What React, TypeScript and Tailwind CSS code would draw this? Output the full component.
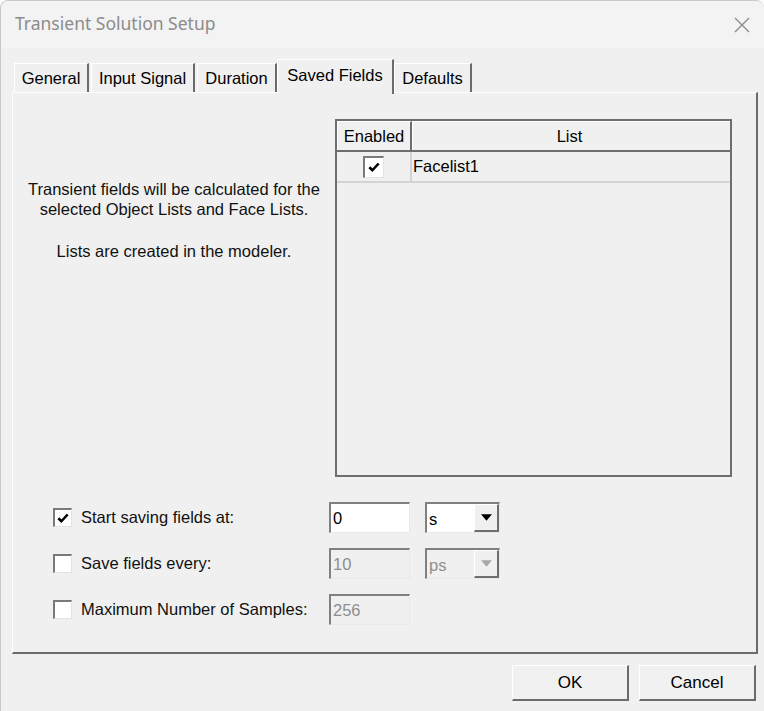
import React from "react";

function Check({ className = "" }: { className?: string }) {
  return (
    <svg viewBox="0 0 12 12" className={className}>
      <path d="M2 6.2 L4.6 8.8 L10 3" fill="none" stroke="#000" strokeWidth="2.2" />
    </svg>
  );
}

function CheckBox({ checked, big }: { checked?: boolean; big?: boolean }) {
  return (
    <div
      className={`${big ? "w-[21px] h-[22px]" : "w-[19px] h-[19px]"} bg-white border-t-2 border-l-2 border-t-[#7a7a7a] border-l-[#7a7a7a] border-b border-r border-b-[#e3e3e3] border-r-[#e3e3e3] flex items-center justify-center`}
    >
      {checked && <Check className="w-[14px] h-[14px]" />}
    </div>
  );
}

function Tab({ label, active, w }: { label: string; active?: boolean; w: string }) {
  if (active) {
    return (
      <div
        className={`relative z-10 ${w} h-[35px] -mb-[2px] pt-[7px] text-center bg-[#f0f0f0] border-t border-l border-t-white border-l-white border-r-2 border-r-[#6b6b6b] text-black`}
      >
        {label}
      </div>
    );
  }
  return (
    <div
      className={`${w} h-[29px] pt-[6px] mt-[4px] text-center border-t border-l border-t-white border-l-white border-r-2 border-r-[#6b6b6b] text-black`}
    >
      {label}
    </div>
  );
}

function Input({ value, disabled }: { value: string; disabled?: boolean }) {
  return (
    <div
      className={`w-[81px] h-[31px] border-t-2 border-l-2 border-t-[#808080] border-l-[#808080] border-b border-r border-b-[#e8e8e8] border-r-[#e8e8e8] flex items-center px-[2px] ${
        disabled ? "bg-[#f0f0f0] text-[#8e8e8e]" : "bg-white text-black"
      }`}
    >
      {value}
    </div>
  );
}

function Select({ value, disabled }: { value: string; disabled?: boolean }) {
  return (
    <div
      className={`w-[75px] h-[31px] border-t-2 border-l-2 border-t-[#808080] border-l-[#808080] border-b border-r border-b-[#e8e8e8] border-r-[#e8e8e8] flex items-stretch ${
        disabled ? "bg-[#f0f0f0] text-[#8e8e8e]" : "bg-white text-black"
      }`}
    >
      <div className="flex-1 flex items-center px-[2px] pt-[3px]">{value}</div>
      <div className="w-[25px] bg-[#f0f0f0] border-t border-l border-t-white border-l-white border-b-2 border-r-2 border-b-[#6e6e6e] border-r-[#6e6e6e] flex items-center justify-center">
        <svg viewBox="0 0 10 6" className="w-[11px] h-[7px]">
          <path d="M0 0 L10 0 L5 6 Z" fill={disabled ? "#a8a8a8" : "#000"} />
        </svg>
      </div>
    </div>
  );
}

function FormRow({
  checked,
  label,
  children,
}: {
  checked?: boolean;
  label: string;
  children: React.ReactNode;
}) {
  return (
    <div className="h-[31px] flex items-center">
      <div className="w-[28px]">
        <CheckBox checked={checked} />
      </div>
      <div className="w-[248px] text-[#111]">{label}</div>
      <div className="flex items-center gap-[15px]">{children}</div>
    </div>
  );
}

function Button({ label }: { label: string }) {
  return (
    <div className="w-[117px] h-[36px] bg-[#f1f1f1] border-t border-l border-t-white border-l-white border-b-2 border-r-2 border-b-[#6b6b6b] border-r-[#6b6b6b] flex items-center justify-center text-[17px] text-black">
      {label}
    </div>
  );
}

export default function App() {
  return (
    <div className="w-[764px] h-[711px] bg-[#f0f0f0] flex flex-col font-['Liberation_Sans',Arial,sans-serif] text-[16.5px] leading-none overflow-hidden rounded-tl-[8px] rounded-tr-[8px] border-t border-l border-[#c8c8c8]">
      {/* Title bar */}
      <div className="h-[47px] bg-[#f3f3f3] flex items-center justify-between pl-[14px] pr-[13px] shrink-0">
        <div className="font-['Noto_Sans',sans-serif] text-[17.5px] text-[#8c8c8c] -mt-[1px]">
          Transient Solution Setup
        </div>
        <svg viewBox="0 0 16 16" className="w-[16px] h-[16px] mr-[1px]">
          <path d="M1 1 L15 15 M15 1 L1 15" stroke="#8a8a8a" strokeWidth="1.3" fill="none" />
        </svg>
      </div>

      {/* Tabs */}
      <div className="h-[44px] pl-[13px] flex items-end shrink-0 pt-[12px]">
        <div className="flex items-start h-[33px]">
          <Tab label="General" w="w-[75px]" />
          <div className="w-[2px]" />
          <Tab label="Input Signal" w="w-[104px]" />
          <div className="w-[2px]" />
          <Tab label="Duration" w="w-[80px]" />
          <Tab label="Saved Fields" w="w-[117px]" active />
          <Tab label="Defaults" w="w-[78px]" />
        </div>
      </div>

      {/* Panel */}
      <div className="ml-[11px] w-[746px] h-[562px] shrink-0 border-t border-l border-t-white border-l-white border-b-2 border-r-2 border-b-[#6b6b6b] border-r-[#6b6b6b] flex flex-col">
        <div className="flex pt-[26px] pr-[24px]">
          <div className="flex-1 flex flex-col items-center text-center text-[#111] pt-[60px]">
            <div className="leading-[20px]">Transient fields will be calculated for the</div>
            <div className="leading-[20px]">selected Object Lists and Face Lists.</div>
            <div className="leading-[20px] mt-[22px]">Lists are created in the modeler.</div>
          </div>
          {/* Table */}
          <div className="w-[397px] h-[358px] border-2 border-[#6e6e6e] flex flex-col">
            <div className="h-[31px] flex border-b-2 border-[#6e6e6e] bg-[#f0f0f0]">
              <div className="w-[75px] flex items-center justify-center border-r-2 border-[#6e6e6e] border-l border-t border-l-white border-t-white">
                Enabled
              </div>
              <div className="flex-1 flex items-center justify-center border-l border-t border-l-white border-t-white pr-[4px]">
                List
              </div>
            </div>
            <div className="h-[31px] flex border-b-2 border-[#d4d4d4]">
              <div className="w-[75px] flex items-center justify-center border-r-2 border-[#d4d4d4]">
                <CheckBox checked big />
              </div>
              <div className="flex-1 flex items-center pl-[1px]">Facelist1</div>
            </div>
            <div className="flex-1" />
          </div>
        </div>

        {/* Form rows */}
        <div className="mt-[25px] pl-[40px] flex flex-col gap-[15px]">
          <FormRow checked label="Start saving fields at:">
            <Input value="0" />
            <Select value="s" />
          </FormRow>
          <FormRow label="Save fields every:">
            <Input value="10" disabled />
            <Select value="ps" disabled />
          </FormRow>
          <FormRow label="Maximum Number of Samples:">
            <Input value="256" disabled />
          </FormRow>
        </div>
      </div>

      {/* Buttons */}
      <div className="flex justify-end gap-[10px] pr-[8px] mt-[11px]">
        <Button label="OK" />
        <Button label="Cancel" />
      </div>
    </div>
  );
}
